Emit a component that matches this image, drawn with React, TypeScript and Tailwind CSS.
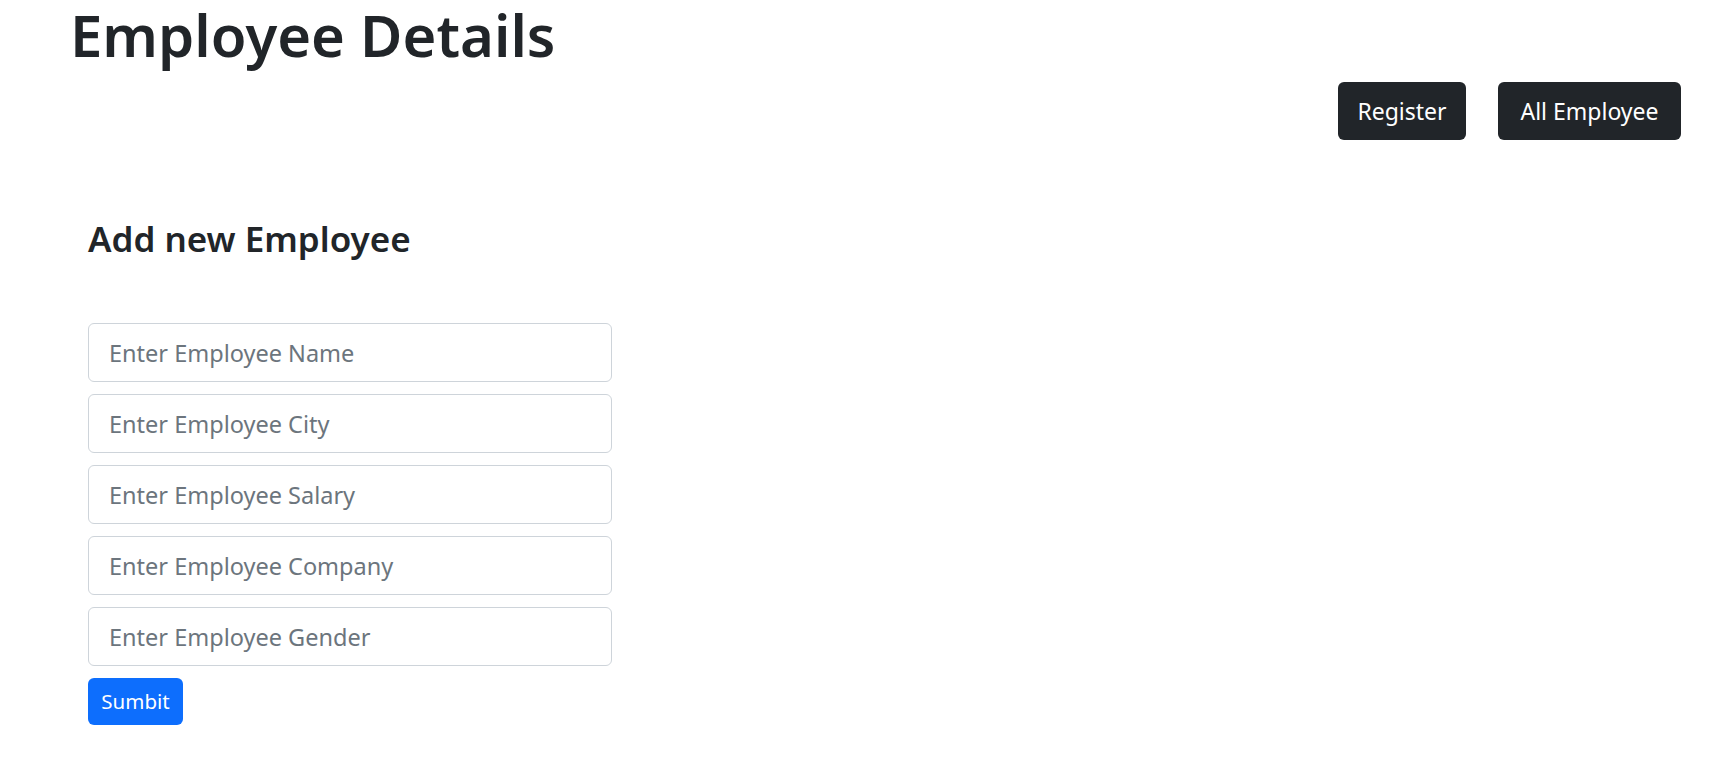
const fields = [
  "Enter Employee Name",
  "Enter Employee City",
  "Enter Employee Salary",
  "Enter Employee Company",
  "Enter Employee Gender",
];

export default function App() {
  return (
    <div
      className="w-full h-[766px] bg-white text-[#212529]"
      style={{ fontFamily: '"Noto Sans", "Open Sans", sans-serif' }}
    >
      <h1 className="pl-[70px] pt-[4px] text-[58px] leading-[62px] font-semibold">
        Employee Details
      </h1>

      <div className="flex justify-end gap-8 pr-[41px] mt-[16px]">
        <button className="h-[58px] w-[128px] rounded-md bg-[#212529] text-white text-[23px]">
          Register
        </button>
        <button className="h-[58px] w-[183px] rounded-md bg-[#212529] text-white text-[23px]">
          All Employee
        </button>
      </div>

      <div className="pl-[88px] pt-[77px]">
        <h3 className="text-[35px] leading-[44px] font-semibold">Add new Employee</h3>

        <form className="mt-[62px] flex flex-col gap-3 w-[524px]">
          {fields.map((f) => (
            <input
              key={f}
              placeholder={f}
              className="h-[59px] w-full rounded-md border border-[#ced4da] px-[20px] text-[23.5px] placeholder:text-[#6c757d] outline-none"
            />
          ))}
          <div>
            <button
              type="button"
              className="h-[47px] w-[95px] rounded-md bg-[#0d6efd] text-white text-[20.5px]"
            >
              Sumbit
            </button>
          </div>
        </form>
      </div>
    </div>
  );
}
